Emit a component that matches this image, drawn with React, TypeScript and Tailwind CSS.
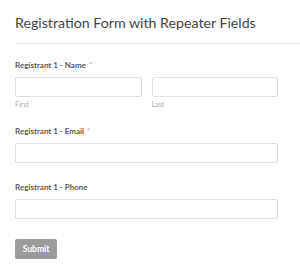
import React from 'react';

const font = { fontFamily: 'Lato, "Open Sans", sans-serif' };

const Label: React.FC<{ text: string; required?: boolean }> = ({ text, required }) => (
  <div className="text-[8px] leading-[10px] font-bold text-[#5a5a5a] whitespace-nowrap">
    {text}
    {required && <span className="ml-[3px] font-normal text-[#d9a3a3]">*</span>}
  </div>
);

const Input: React.FC<{ className?: string }> = ({ className = '' }) => (
  <input
    type="text"
    className={`block h-[20px] border border-[#e0e0e0] rounded-[2px] bg-white outline-none ${className}`}
  />
);

export default function App() {
  return (
    <div className="w-[300px] h-[277px] bg-white overflow-hidden" style={font}>
      <div className="pl-[15px] pt-[14px]">
        <h1 className="text-[14.2px] leading-[18px] text-[#444] font-normal whitespace-nowrap">
          Registration Form with Repeater Fields
        </h1>
        <div className="mt-[11px] h-px bg-[#ebebeb]" />

        <div className="mt-[16px] w-[263px]">
          <Label text="Registrant 1 - Name" required />
          <div className="mt-[7px] flex gap-[10px]">
            <div className="flex-1 flex flex-col">
              <Input className="w-full" />
              <span className="mt-[2px] text-[7px] leading-[10px] text-[#aaa]">First</span>
            </div>
            <div className="flex-1 flex flex-col">
              <Input className="w-full" />
              <span className="mt-[2px] text-[7px] leading-[10px] text-[#aaa]">Last</span>
            </div>
          </div>

          <div className="mt-[17px]">
            <Label text="Registrant 1 - Email" required />
            <Input className="mt-[7px] w-full" />
          </div>

          <div className="mt-[19px]">
            <Label text="Registrant 1 - Phone" />
            <Input className="mt-[7px] w-full" />
          </div>

          <button className="block mt-[20px] h-[20px] w-[42px] rounded-[2px] bg-[#9b9b9b] text-white text-[8.5px] leading-[20px] font-bold">
            Submit
          </button>
        </div>
      </div>
    </div>
  );
}
